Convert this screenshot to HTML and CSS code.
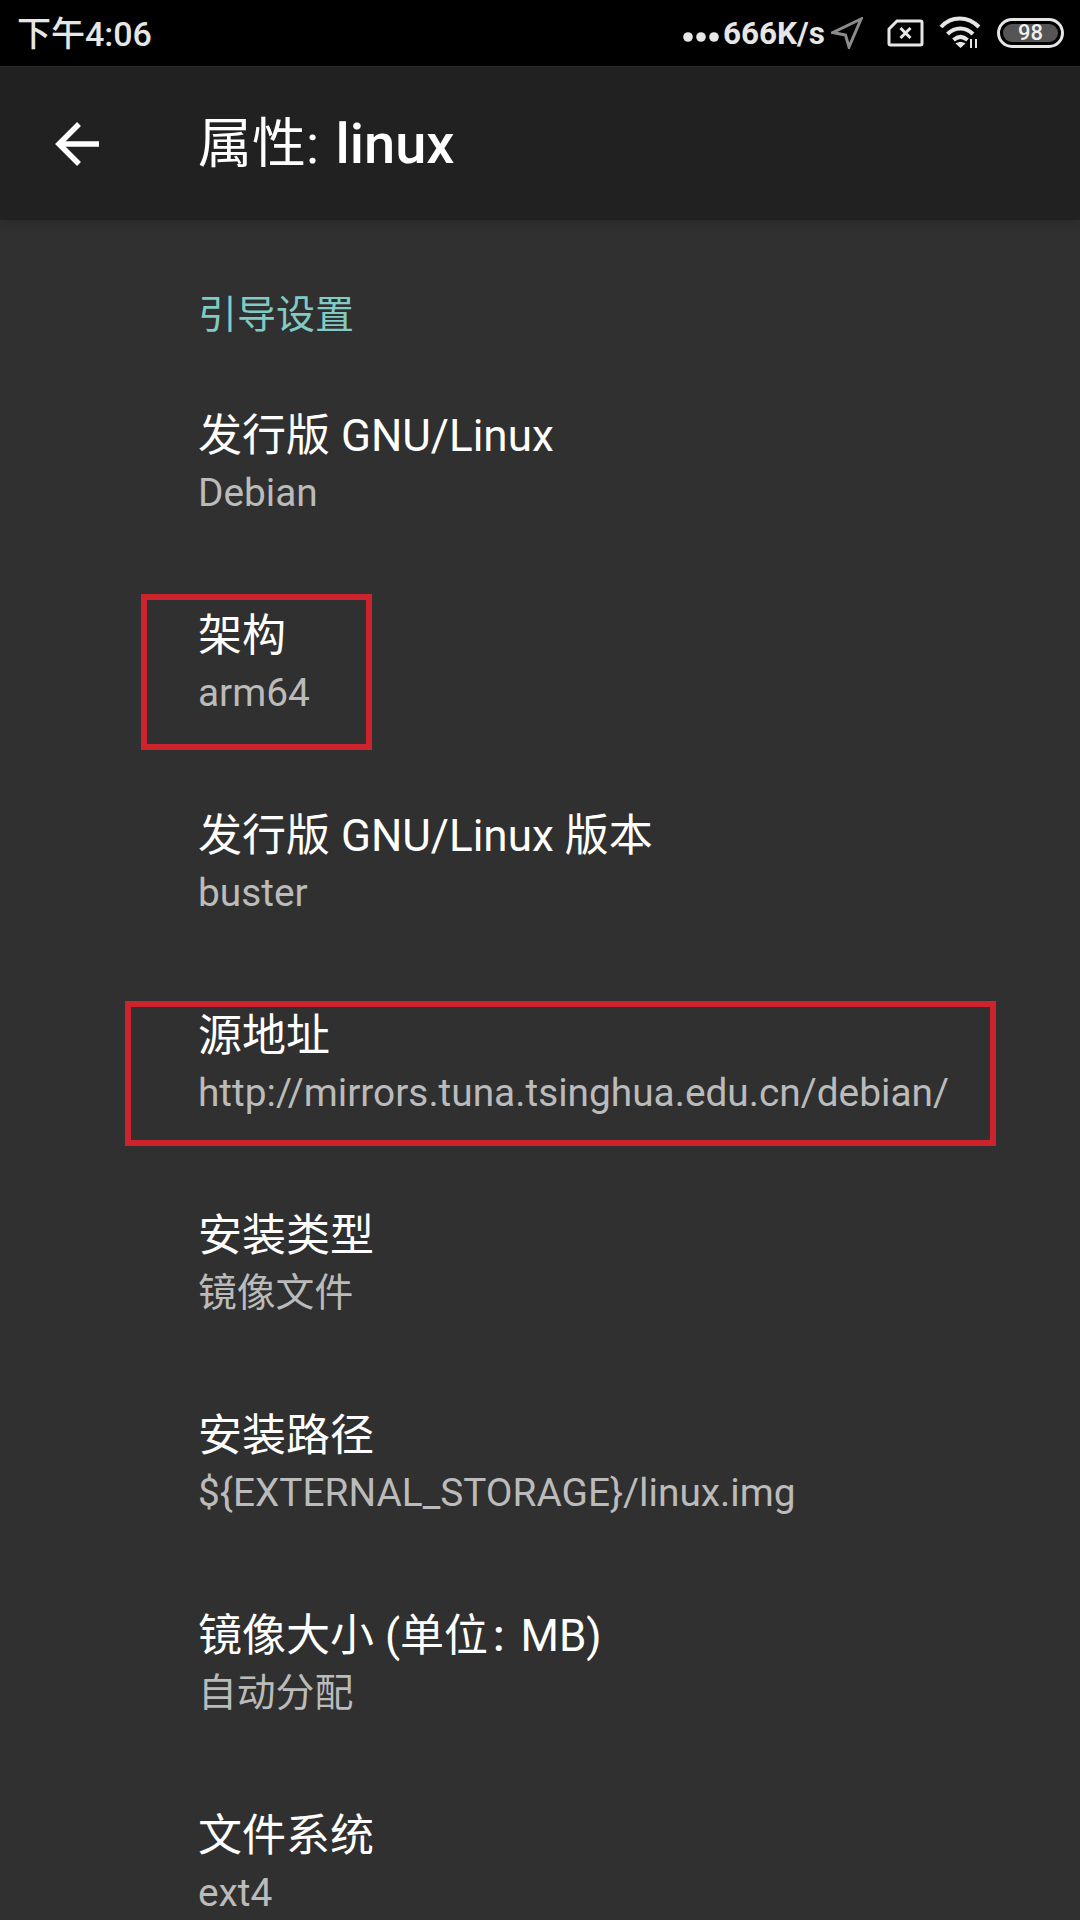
FILE: index.html
```html
<!DOCTYPE html>
<html lang="zh-CN">
  <head>
    <meta charset="utf-8">
    <title>属性: linux</title>
    <link rel="stylesheet" href="styles.css">
  </head>
  <body>
    <div class="status-bar">
      <span class="clock">下午4:06</span>
      <div class="status-icons">
        <svg class="dots" width="36" height="12" viewBox="0 0 36 12"><circle cx="5" cy="6" r="4.800"/><circle cx="18" cy="6" r="4.800"/><circle cx="31" cy="6" r="4.800"/></svg>
        <span class="speed">666K/s</span>
        <svg class="ic-nav" width="32" height="32" viewBox="0 0 32 32"><path d="M30 2 2 15.500l12.500 2.500L18 30z"/></svg>
        <svg class="ic-sim" width="37" height="28" viewBox="0 0 37 28"><path d="M10 2h23.500a1.500 1.500 0 0 1 1.500 1.500v21a1.500 1.500 0 0 1-1.500 1.500H3.500A1.500 1.500 0 0 1 2 24.500V10z"/><path d="m13.500 9 10 10m0-10-10 10"/></svg>
        <svg class="ic-wifi" width="43" height="34" viewBox="0 0 43 34"><path d="M2 11C12-.5 29-.5 40 11"/><path d="M8.500 18c7.500-7.500 18-7.500 25.500 0"/><path d="M14.500 24c4.500-4 9.500-4 14 0"/><path class="fill" d="m21.500 32-5-4.500c3-2 7-2 10 0z"/><path class="thin" d="M32 23v9m5-9v9"/></svg>
        <div class="battery"><span>98</span></div>
      </div>
    </div>

    <header class="toolbar">
      <svg class="back" width="44" height="44" viewBox="0 0 44 44"><path d="M44 22H4M24 2 4 22l20 20"/></svg>
      <h1>属性: <b>linux</b></h1>
    </header>

    <main class="prefs">
      <h2 class="category">引导设置</h2>
      <div class="pref"><div class="pref-title">发行版 GNU/Linux</div><div class="pref-sub">Debian</div></div>
      <div class="pref"><div class="pref-title">架构</div><div class="pref-sub">arm64</div></div>
      <div class="pref"><div class="pref-title">发行版 GNU/Linux 版本</div><div class="pref-sub">buster</div></div>
      <div class="pref"><div class="pref-title">源地址</div><div class="pref-sub">http://mirrors.tuna.tsinghua.edu.cn/debian/</div></div>
      <div class="pref"><div class="pref-title">安装类型</div><div class="pref-sub">镜像文件</div></div>
      <div class="pref"><div class="pref-title">安装路径</div><div class="pref-sub">${EXTERNAL_STORAGE}/linux.img</div></div>
      <div class="pref"><div class="pref-title">镜像大小 (单位<span class="colon">:</span> MB)</div><div class="pref-sub">自动分配</div></div>
      <div class="pref"><div class="pref-title">文件系统</div><div class="pref-sub">ext4</div></div>
    </main>

    <div class="mark mark-arch"></div>
    <div class="mark mark-source"></div>
  </body>
</html>
```

FILE: styles.css
```css
html, body {
  height: 1920px;
  margin: 0;
  overflow: hidden;
}
body {
  background: #303030;
  font-family: Roboto, "Noto Sans CJK SC", sans-serif;
  position: relative;
}

.status-bar {
  align-items: center;
  background: #000;
  box-sizing: border-box;
  color: #e6e6e6;
  display: flex;
  height: 66px;
  justify-content: space-between;
  padding: 0 16px 0 17px;
}
.clock {
  font-size: 34px;
  font-weight: 500;
  margin-bottom: 4px;
}
.status-icons {
  align-items: center;
  display: flex;
}
.dots {
  fill: #e6e6e6;
  margin: 8px 4px 0 0;
}
.speed {
  font-size: 31.500px;
  font-weight: 700;
}
.ic-nav {
  fill: none;
  margin-left: 6px;
  stroke: #8c8c8c;
  stroke-width: 3;
}
.ic-sim {
  fill: none;
  margin-left: 24px;
  stroke: #e6e6e6;
  stroke-width: 3;
}
.ic-wifi {
  fill: none;
  margin-left: 15px;
  stroke: #e6e6e6;
  stroke-width: 4;
}
.ic-wifi .fill {
  fill: #e6e6e6;
  stroke: none;
}
.ic-wifi .thin {
  stroke-width: 2;
}
.battery {
  border: 3px solid #e6e6e6;
  border-radius: 15px;
  box-sizing: border-box;
  height: 30px;
  margin-left: 15px;
  padding: 3px;
  width: 67px;
}
.battery span {
  background: #555;
  border-radius: 9px;
  color: #f0f0f0;
  display: block;
  font-size: 22px;
  font-weight: 500;
  height: 18px;
  line-height: 18px;
  text-align: center;
}

.toolbar {
  align-items: center;
  background: #212121;
  border-top: 1px solid #2a2a2a;
  box-shadow: 0 2px 10px rgba(0, 0, 0, 0.2);
  box-sizing: border-box;
  color: #fff;
  display: flex;
  height: 154px;
  padding-left: 55px;
  position: relative;
}
.back {
  fill: none;
  stroke: #fff;
  stroke-width: 5.500;
}
.toolbar h1 {
  font-size: 54px;
  font-weight: 400;
  margin: 0 0 8px 99px;
}
.toolbar h1 b {
  font-size: 56px;
  font-weight: 500;
  margin-left: 3px;
}

.prefs {
  padding-left: 198px;
}
.category {
  color: #80cbc4;
  font-size: 39px;
  font-weight: 400;
  line-height: 52px;
  margin: 0;
  padding-top: 69px;
}
.pref {
  display: flex;
  flex-direction: column;
  gap: 4px;
  height: 200px;
  justify-content: center;
}
.pref:first-of-type {
  margin-top: 23px;
}
.pref-title {
  color: #fff;
  font-size: 44px;
  line-height: 52px;
}
.colon {
  font-weight: 500;
  margin: 0 5px;
}
.pref-sub {
  color: #bbb;
  font-size: 38.800px;
  line-height: 52px;
  margin-top: 1px;
}

.mark {
  border: 6px solid #cd232d;
  box-sizing: border-box;
  position: absolute;
}
.mark-arch {
  height: 156px;
  left: 141px;
  top: 594px;
  width: 231px;
}
.mark-source {
  height: 145px;
  left: 125px;
  top: 1001px;
  width: 871px;
}
```
